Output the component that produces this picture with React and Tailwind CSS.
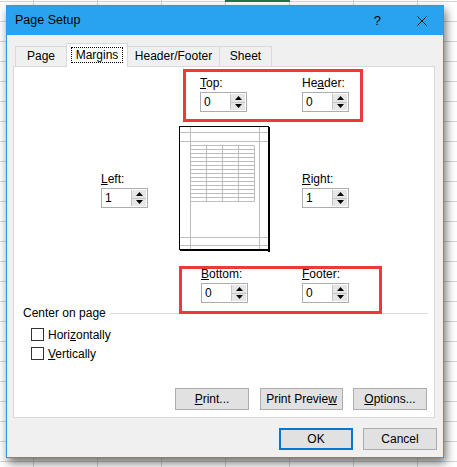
import React from "react";

const Arrow = ({ up }) => (
  <svg width="7" height="4" viewBox="0 0 7 4">
    <polygon points={up ? "0,4 3.5,0 7,4" : "0,0 3.5,4 7,0"} fill="#000" />
  </svg>
);

const Spin = ({ value }) => (
  <div className="flex h-[20px] w-[47px] border border-[#abadb3] bg-white">
    <div className="flex-1 pl-[3px] text-[12px] leading-[18px] text-black">{value}</div>
    <div className="my-px mr-px flex w-[15px] flex-col border-l border-[#c4c4c4]">
      <div className="flex flex-1 items-center justify-center border-b border-[#c4c4c4] bg-[#e6e6e6]">
        <Arrow up />
      </div>
      <div className="flex flex-1 items-center justify-center bg-[#e6e6e6]">
        <Arrow />
      </div>
    </div>
  </div>
);

const Field = ({ label, value, className = "" }) => (
  <div className={className}>
    <div className="leading-[14px]">{label}</div>
    <div className="mt-[2px]">
      <Spin value={value} />
    </div>
  </div>
);

const Btn = ({ children, w, def }) => (
  <div
    className={`flex h-[22px] items-center justify-center bg-[#e1e1e1] ${w} ${
      def ? "border-2 border-[#0078d7]" : "border border-[#adadad]"
    }`}
  >
    {children}
  </div>
);

const Check = ({ children }) => (
  <div className="flex h-[13px] items-center gap-[4px] pl-[17px]">
    <div className="h-[13px] w-[13px] border border-[#333] bg-white" />
    <span className="leading-[14px]">{children}</span>
  </div>
);

const PagePreview = () => {
  const rows = [];
  for (let i = 0; i < 15; i++) rows.push(19.5 + i * 4);
  const cols = [11.5, 27.5, 43.5, 59.5, 75.5];
  return (
    <svg width="92" height="126" viewBox="0 0 92 126">
      <rect x="0" y="0" width="91" height="126" fill="#fff" />
      <g stroke="#bdbdbd" strokeWidth="1">
        <line x1="11.5" y1="1" x2="11.5" y2="123" />
        <line x1="80.5" y1="1" x2="80.5" y2="123" />
        <line x1="1" y1="6.5" x2="89" y2="6.5" />
        <line x1="1" y1="15.5" x2="89" y2="15.5" />
        <line x1="1" y1="111.5" x2="89" y2="111.5" />
        <line x1="1" y1="119.5" x2="89" y2="119.5" />
        {rows.map((y) => (
          <line key={y} x1="11.5" y1={y} x2="75.5" y2={y} />
        ))}
        {cols.map((x) => (
          <line key={x} x1={x} y1="19.5" x2={x} y2="75.5" />
        ))}
      </g>
      <rect x="0.5" y="0.5" width="89" height="123" fill="none" stroke="#000" strokeWidth="1" />
      <rect x="89" y="1" width="2" height="125" fill="#000" />
      <rect x="1" y="123" width="90" height="2" fill="#000" />
    </svg>
  );
};

export default function App() {
  return (
    <div className="relative h-[467px] w-[457px] overflow-hidden bg-white font-['Liberation_Sans',Arial,sans-serif] text-[12px] text-black">
      {/* spreadsheet behind */}
      <div className="h-full w-full [background-image:linear-gradient(to_right,#d4d4d4_1px,transparent_1px),linear-gradient(to_bottom,#d4d4d4_1px,transparent_1px)] [background-position:33px_21px] [background-size:64px_20px]">
        <div className="ml-[225px] h-[2px] w-[65px] bg-[#217346]" />
      </div>

      {/* dialog */}
      <div className="absolute left-[6px] top-[5px] h-[453px] w-[438px] border border-[#2b9cea] bg-[#f0f0f0] shadow-[2px_5px_9px_rgba(0,0,0,0.55)]">
        <div className="flex h-[29px] items-center bg-[#2aa3ef] pl-[8px] pr-[16px]">
          <span className="text-[12.5px]">Page Setup</span>
          <span className="ml-auto mr-[36px] text-[13px]">?</span>
          <svg width="10" height="10" viewBox="0 0 10 10">
            <path d="M0.5 0.5 L9.5 9.5 M9.5 0.5 L0.5 9.5" stroke="#000" strokeWidth="1" />
          </svg>
        </div>

        {/* tabs */}
        <div className="mt-[8px] flex h-[23px] items-end pl-[8px]">
          <div className="flex h-[20px] w-[51px] justify-center border-l border-t border-[#d9d9d9] pt-[2px] leading-[14px]">
            Page
          </div>
          <div className="relative z-10 -mb-px flex h-[24px] w-[62px] justify-center border-x border-t border-[#d9d9d9] bg-white pt-[3px]">
            <span className="h-[16px] border border-dotted border-black px-[4px] leading-[14px]">Margins</span>
          </div>
          <div className="flex h-[20px] w-[92px] justify-center border-r border-t border-[#d9d9d9] pt-[2px] leading-[14px]">
            Header/Footer
          </div>
          <div className="flex h-[20px] w-[52px] justify-center border-r border-t border-[#d9d9d9] pt-[2px] leading-[14px]">
            Sheet
          </div>
        </div>

        {/* panel */}
        <div className="ml-[6px] h-[352px] w-[422px] border border-[#d9d9d9] bg-white">
          <div className="relative z-10 ml-[169px] mt-[2px] h-[53px] w-[180px] border-[3px] border-[#f0383c]">
            <div className="flex pl-[14px] pt-[4px]">
              <Field className="w-[102px]" label={<><u>T</u>op:</>} value="0" />
              <Field label={<>He<u>a</u>der:</>} value="0" />
            </div>
          </div>

          <div className="mt-[4px] flex pl-[87px]">
            <Field className="w-[78px] pt-[46px]" label={<><u>L</u>eft:</>} value="1" />
            <PagePreview />
            <Field className="ml-[31px] pt-[46px]" label={<><u>R</u>ight:</>} value="1" />
          </div>

          <div className="relative z-10 ml-[165px] mt-[14px] h-[48px] w-[203px] border-[3px] border-[#f0383c]">
            <div className="-mt-[2px] flex pl-[19px]">
              <Field className="w-[101px]" label={<><u>B</u>ottom:</>} value="0" />
              <Field label={<><u>F</u>ooter:</>} value="0" />
            </div>
          </div>

          <div className="-mt-[8px] flex items-center pl-[9px] pr-[6px]">
            <span className="leading-[14px]">Center on page</span>
            <div className="ml-[4px] h-px flex-1 bg-[#dcdcdc]" />
          </div>
          <div className="mt-[8px]">
            <Check>
              Hori<u>z</u>ontally
            </Check>
          </div>
          <div className="mt-[6px]">
            <Check>
              <u>V</u>ertically
            </Check>
          </div>

          <div className="mt-[28px] flex justify-end pr-[7px]">
            <Btn w="w-[74px]">
              <u>P</u>rint...
            </Btn>
            <div className="w-[11px]" />
            <Btn w="w-[83px]">
              Print Previe<u>w</u>
            </Btn>
            <div className="w-[10px]" />
            <Btn w="w-[74px]">
              <u>O</u>ptions...
            </Btn>
          </div>
        </div>

        <div className="mt-[10px] flex justify-end gap-[10px] pr-[6px]">
          <Btn w="w-[74px]" def>
            OK
          </Btn>
          <Btn w="w-[74px]">Cancel</Btn>
        </div>
      </div>
    </div>
  );
}
